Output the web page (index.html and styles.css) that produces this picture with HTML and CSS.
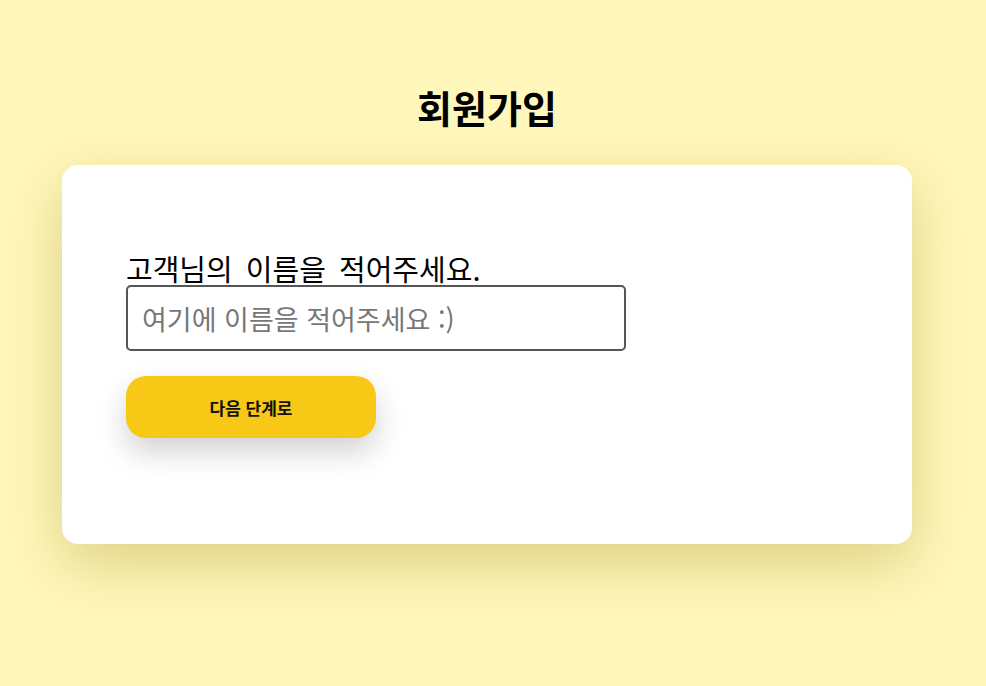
FILE: index.html
```html
<!DOCTYPE html>
<html lang="ko">

<head>
    <meta charset="UTF-8">
    <meta name="viewport" content="width=device-width, initial-scale=1.0">
    <title>회원가입</title>
    <link rel="stylesheet" href="styles.css">
</head>

<body>
    <div class="wrap">
        <h1 class="title">회원가입</h1>
        <div class="card">
            <label class="label" for="name">고객님의 이름을 적어주세요.</label>
            <input class="name-input" id="name" type="text" placeholder="여기에 이름을 적어주세요 :)">
            <button class="next-btn">다음 단계로</button>
        </div>
    </div>
</body>

</html>
```

FILE: styles.css
```css
* {
    padding: 0;
    margin: 0;
    box-sizing: border-box;
}

body {
    background-color: #fff7bc;
    font-family: "Noto Sans CJK KR", "Noto Sans", sans-serif;
    color: #000;
    padding-right: 12px;
    min-height: 100vh;
}

.wrap {
    width: 850px;
    margin: 0 auto;
    padding-bottom: 120px;
}

.title {
    font-size: 38px;
    line-height: 52px;
    font-weight: 700;
    text-align: center;
    margin: 81px 0 32px;
}

.card {
    background-color: #fff;
    border-radius: 16px;
    padding: 86px 64px 106px;
    box-shadow: 0 20px 60px rgba(160, 140, 30, .36);
    display: flex;
    flex-direction: column;
    align-items: flex-start;
}

.label {
    display: block;
    font-size: 29px;
    line-height: 34px;
    font-weight: 400;
    word-spacing: 5px;
}

.name-input {
    width: 500px;
    height: 66px;
    border: 2px solid #555;
    border-radius: 5px;
    padding: 0 14px;
    font-family: "Noto Sans CJK KR", sans-serif;
    font-size: 27px;
    font-weight: 400;
    outline: none;
}

.name-input::placeholder {
    color: #777;
}

.next-btn {
    margin-top: 25px;
    width: 250px;
    height: 62px;
    border: 0;
    border-radius: 20px;
    background-color: #f7c815;
    font-family: "Noto Sans CJK KR", sans-serif;
    font-size: 17px;
    font-weight: 700;
    color: #111;
    box-shadow: 0 14px 30px rgba(0, 0, 0, .18);
    cursor: pointer;
}
```
